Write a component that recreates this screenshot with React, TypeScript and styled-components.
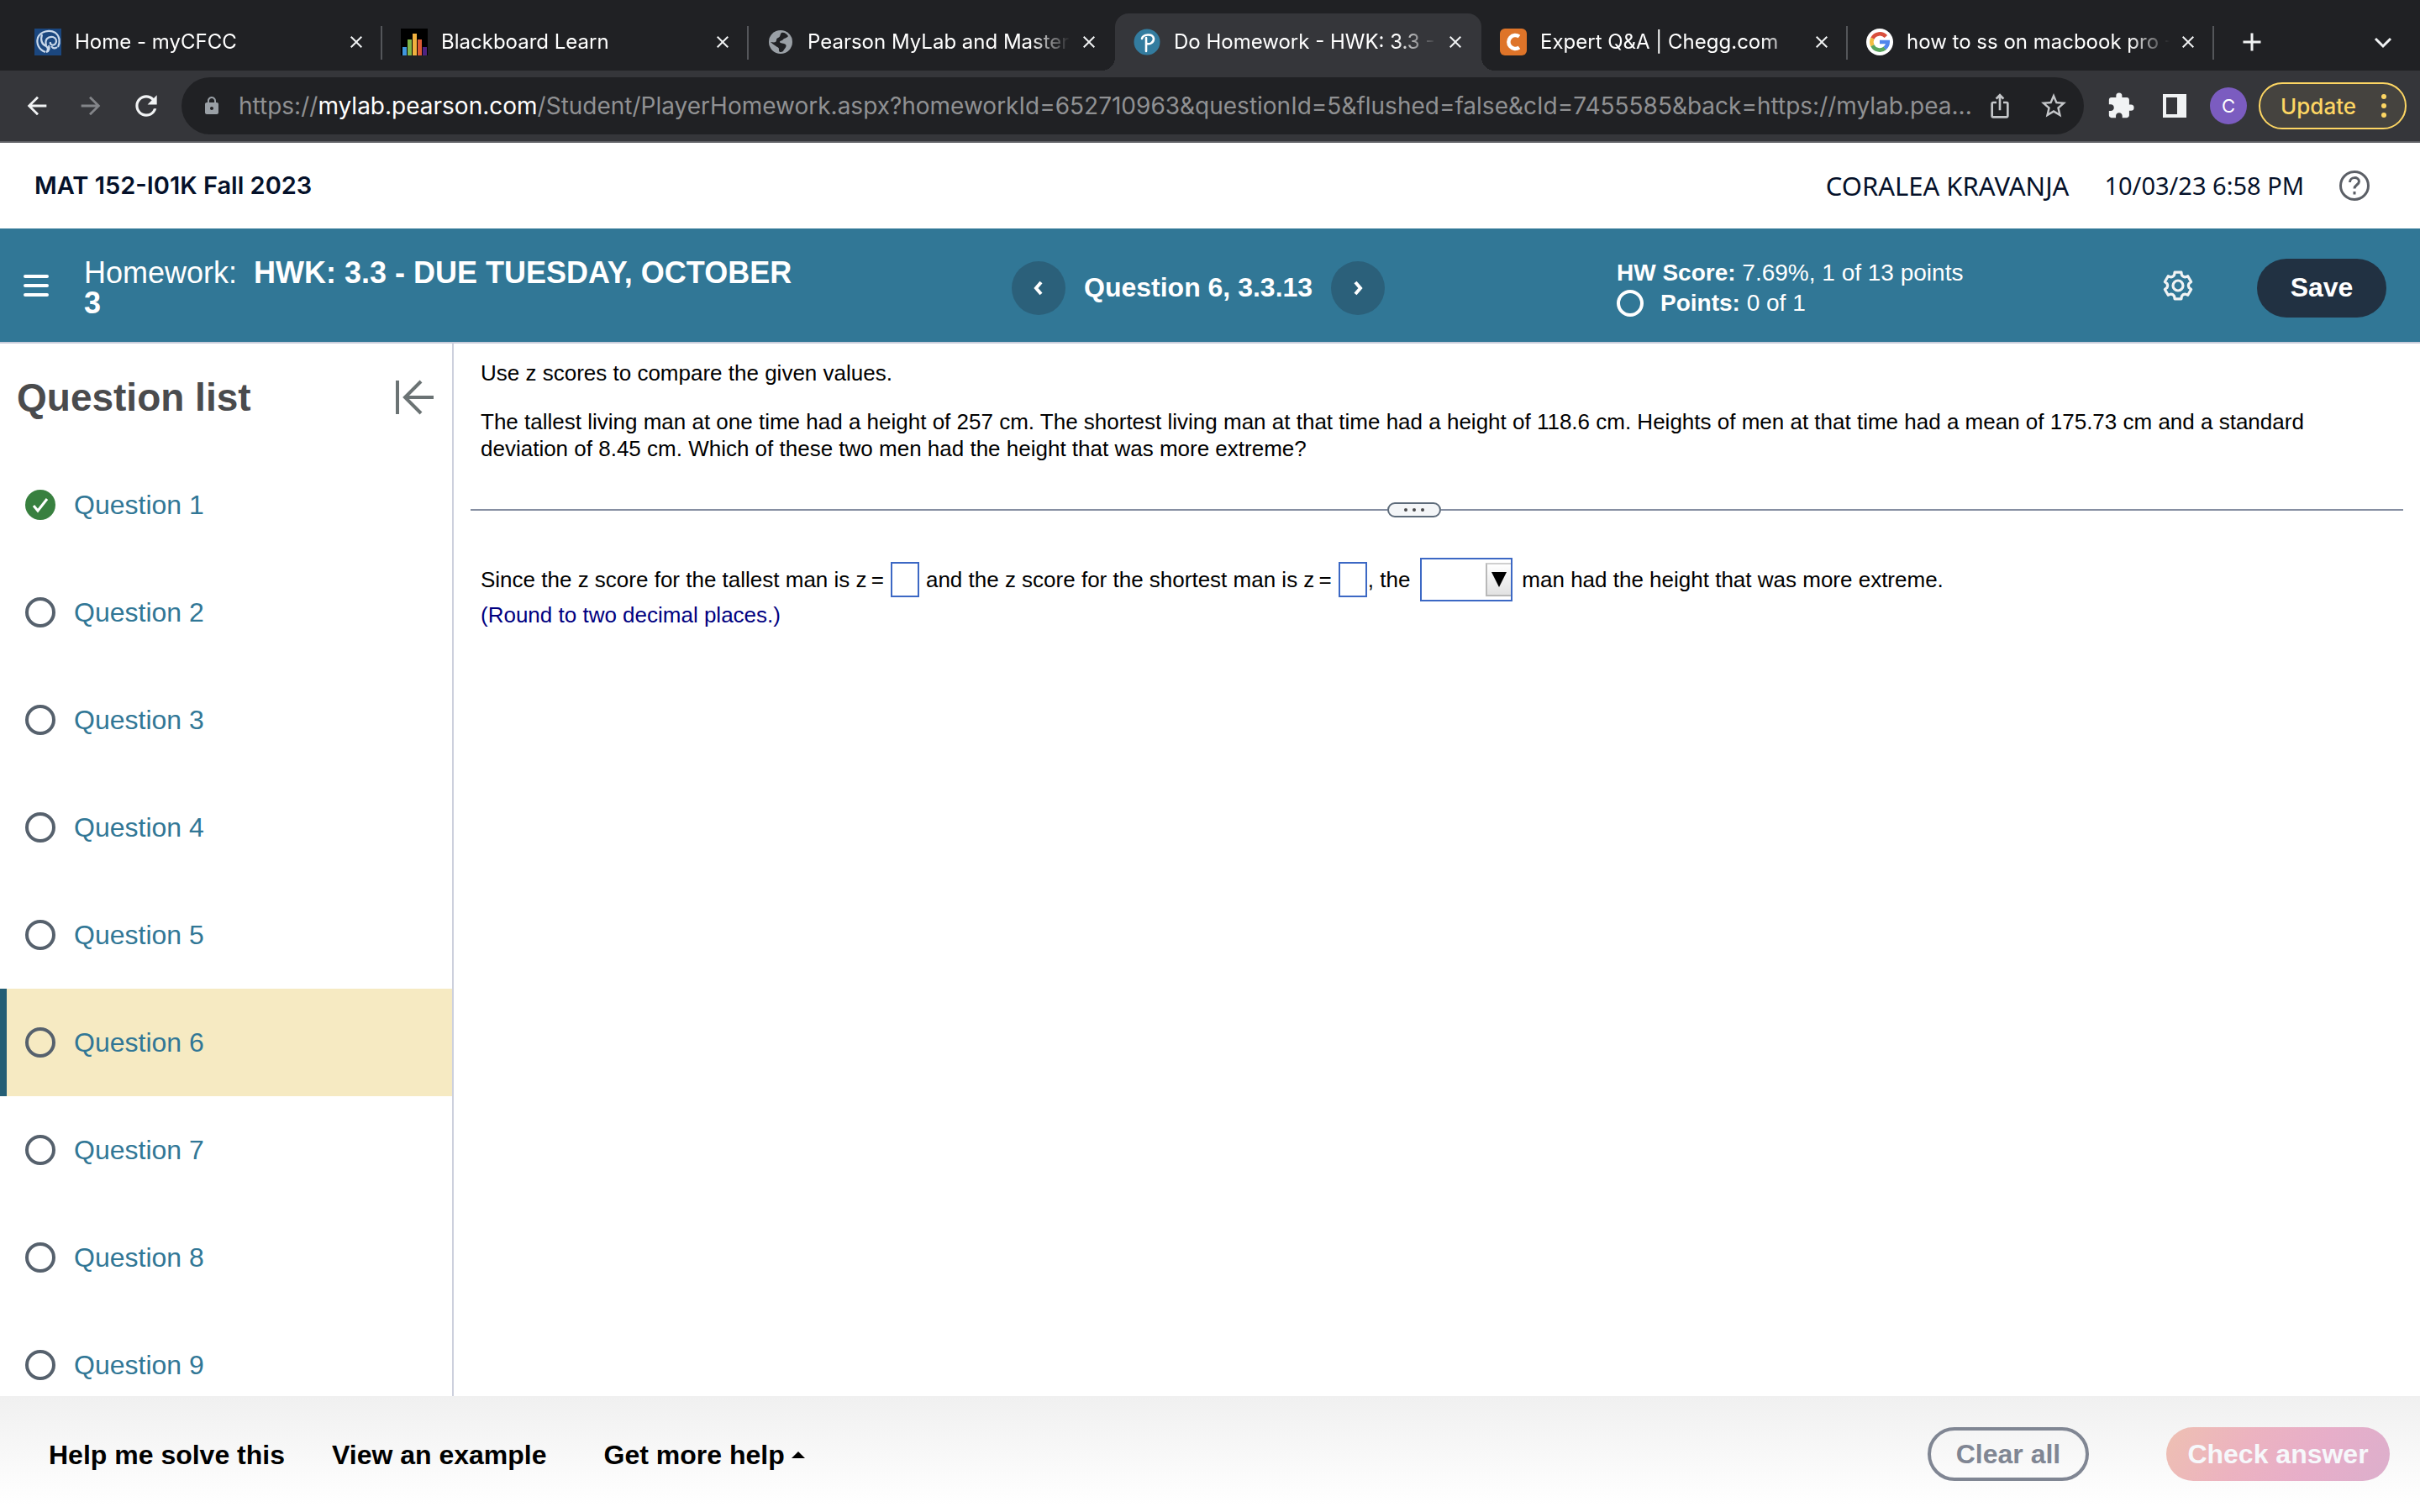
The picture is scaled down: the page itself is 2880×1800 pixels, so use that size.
import React from "react";
import styled, { createGlobalStyle, css } from "styled-components";
import {
  MdArrowBack,
  MdArrowForward,
  MdRefresh,
  MdLock,
  MdIosShare,
  MdStarBorder,
  MdExtension,
  MdAdd,
  MdClose,
} from "react-icons/md";

const ui = `Inter, "Liberation Sans", sans-serif`;
const sans = `"Liberation Sans", Arial, Helvetica, sans-serif`;

const GlobalStyle = createGlobalStyle`
  * { box-sizing: border-box; }
  body { margin: 0; background: #fff; font-family: ${sans}; }
  button { font: inherit; color: inherit; background: none; border: 0; padding: 0; cursor: pointer; }
  p, h1, h2, ul { margin: 0; padding: 0; }
  a { text-decoration: none; }
  svg { display: block; flex: none; }
`;

const Page = styled.div`
  display: flex;
  flex-direction: column;
  height: 100vh;
  overflow: hidden;
`;

/* ---------- browser chrome ---------- */

const TabStrip = styled.div`
  flex: none;
  display: flex;
  align-items: flex-end;
  height: 84px;
  padding: 0 24px 0 19px;
  background: #202124;
  color: #fff;
  font-family: ${ui};
`;

const Tab = styled.div<{ $active?: boolean; $plain?: boolean }>`
  position: relative;
  display: flex;
  align-items: center;
  flex: 0 1 436px;
  min-width: 0;
  height: 68px;
  padding: 0 19px 0 22px;
  ${(p) =>
    p.$active &&
    css`
      background: #35363a;
      border-radius: 16px 16px 0 0;
      &::before,
      &::after {
        content: "";
        position: absolute;
        bottom: 0;
        width: 16px;
        height: 16px;
      }
      &::before {
        right: 100%;
        background: radial-gradient(circle at 0 0, transparent 16px, #35363a 16px);
      }
      &::after {
        left: 100%;
        background: radial-gradient(circle at 100% 0, transparent 16px, #35363a 16px);
      }
    `}
  ${(p) =>
    !p.$active &&
    !p.$plain &&
    css`
      &::after {
        content: "";
        position: absolute;
        right: 0;
        top: 15px;
        width: 2px;
        height: 40px;
        background: #54565a;
      }
    `}
`;

const TabTitle = styled.span`
  flex: 1;
  min-width: 0;
  margin: 0 10px 0 16px;
  overflow: hidden;
  white-space: nowrap;
  font-size: 24px;
  font-weight: 400;
  line-height: 32px;
  mask-image: linear-gradient(to right, #000 calc(100% - 48px), transparent);
`;

const IconButton = styled.button<{ $dim?: boolean }>`
  display: flex;
  align-items: center;
  justify-content: center;
  flex: none;
  color: ${(p) => (p.$dim ? "#838589" : "#f1f3f4")};
`;

const NewTab = styled(IconButton)`
  width: 36px;
  height: 68px;
  margin-left: 27px;
`;

const TabSearch = styled(IconButton)`
  width: 40px;
  height: 68px;
  margin-left: auto;
`;

const Toolbar = styled.div`
  flex: none;
  display: flex;
  align-items: center;
  height: 86px;
  padding: 0 16px 0 27px;
  background: #35363a;
  border-bottom: 2px solid #5f6065;
  font-family: ${ui};
`;

const NavIcons = styled.div`
  display: flex;
  gap: 30px;
  margin-right: 23px;
`;

const Address = styled.div`
  display: flex;
  align-items: center;
  flex: 1;
  min-width: 0;
  height: 68px;
  padding: 0 18px 0 24px;
  border-radius: 34px;
  background: #202124;
  color: #9aa0a6;
`;

const Url = styled.span`
  flex: 1;
  min-width: 0;
  margin: 0 8px 0 20px;
  overflow: hidden;
  white-space: nowrap;
  text-overflow: ellipsis;
  font-size: 28px;
  line-height: 36px;
  color: #909193;
  b {
    font-weight: 400;
    color: #fff;
  }
`;

const AddressActions = styled.div`
  display: flex;
  gap: 30px;
`;

const Extensions = styled.div`
  display: flex;
  align-items: center;
  gap: 20px;
  margin: 0 14px 0 22px;
  > button {
    width: 44px;
    height: 44px;
  }
`;

const Avatar = styled.button`
  border-radius: 50%;
  background: #7b5cc0;
  color: #fff;
  font-size: 22px;
  line-height: 44px;
  text-align: center;
`;

const UpdateButton = styled.button`
  display: flex;
  align-items: center;
  justify-content: space-between;
  width: 176px;
  height: 56px;
  padding: 0 22px 0 24px;
  border: 2px solid #fdd663;
  border-radius: 28px;
  background: #45433f;
  color: #fdd663;
  font-size: 26px;
  font-weight: 500;
`;

/* ---------- course header ---------- */

const CourseHeader = styled.header`
  flex: none;
  display: flex;
  align-items: center;
  gap: 42px;
  height: 102px;
  padding: 0 60px 0 41px;
  color: #05112a;
  font-family: "Noto Sans", "Open Sans", sans-serif;
  font-size: 31px;
  line-height: 40px;
`;

const CourseName = styled.h1`
  margin-right: auto;
  font-family: ${ui};
  font-size: 29px;
  font-weight: 600;
`;

const Clock = styled.time`
  font-size: 29px;
`;

const HelpButton = styled(IconButton)`
  color: #5b5f66;
`;

/* ---------- assignment bar ---------- */

const AssignmentBar = styled.div`
  flex: none;
  display: grid;
  grid-template-columns: 5fr 3fr 4fr;
  align-items: center;
  height: 137px;
  padding-top: 6px;
  border-bottom: 2px solid #c9cddb;
  background: #317796;
  color: #fff;
`;

const AssignmentLeft = styled.div`
  display: flex;
  align-items: center;
  gap: 42px;
  padding-left: 28px;
`;

const BarIcon = styled(IconButton)`
  padding-bottom: 6px;
`;

const AssignmentTitle = styled.h2`
  max-width: 860px;
  font-size: 36px;
  font-weight: 400;
  line-height: 36px;
`;

const QuestionNav = styled.nav`
  display: flex;
  align-items: center;
  gap: 22px;
  padding-left: 4px;
  font-size: 32px;
  font-weight: 700;
`;

const RoundButton = styled.button`
  display: flex;
  align-items: center;
  justify-content: center;
  width: 64px;
  height: 64px;
  border-radius: 50%;
  background: #2b607a;
`;

const AssignmentRight = styled.div`
  display: flex;
  align-items: center;
  padding: 0 40px 0 4px;
`;

const Score = styled.div`
  display: flex;
  flex-direction: column;
  margin-right: auto;
  font-size: 28px;
  line-height: 36px;
`;

const Points = styled.div`
  display: flex;
  align-items: center;
  gap: 20px;
`;

const SettingsButton = styled(BarIcon)`
  margin-right: 76px;
`;

const SaveButton = styled.button`
  width: 154px;
  height: 70px;
  border-radius: 35px;
  background: #213142;
  font-size: 32px;
  font-weight: 700;
`;

/* ---------- body ---------- */

const Body = styled.div`
  flex: 1;
  display: flex;
  min-height: 0;
`;

const Sidebar = styled.aside`
  flex: none;
  width: 540px;
  overflow: hidden;
  border-right: 2px solid #cdd0dd;
`;

const SidebarHead = styled.div`
  display: flex;
  align-items: center;
  justify-content: space-between;
  height: 128px;
  padding: 0 22px 0 20px;
`;

const SidebarTitle = styled.h2`
  color: #4a4b4d;
  font-size: 46px;
  line-height: 56px;
`;

const QuestionList = styled.ul`
  list-style: none;
`;

const QuestionLink = styled.a<{ $current?: boolean }>`
  display: flex;
  align-items: center;
  gap: 22px;
  height: 128px;
  padding-left: 22px;
  border-left: 8px solid ${(p) => (p.$current ? "#245e75" : "transparent")};
  background: ${(p) => (p.$current ? "#f6eac2" : "transparent")};
  background-clip: padding-box;
  color: #317796;
  font-size: 32px;
`;

const Ring = styled.span<{ $light?: boolean }>`
  flex: none;
  width: ${(p) => (p.$light ? 32 : 36)}px;
  height: ${(p) => (p.$light ? 32 : 36)}px;
  border: 4px solid ${(p) => (p.$light ? "#fff" : "#56616d")};
  border-radius: 50%;
`;

const Content = styled.main`
  flex: 1;
  min-width: 0;
  display: flex;
  flex-direction: column;
  padding: 19px 20px 0;
  color: #000;
  font-size: 26px;
  line-height: 32px;
`;

const Prompt = styled.div`
  display: flex;
  flex-direction: column;
  gap: 26px;
  padding: 0 12px;
`;

const Divider = styled.div`
  display: flex;
  align-items: center;
  margin: 48px 0;
`;

const Line = styled.span<{ $share: number }>`
  flex: ${(p) => p.$share};
  height: 2px;
  background: #868fa2;
`;

const Grip = styled.button`
  display: flex;
  align-items: center;
  justify-content: center;
  gap: 6px;
  width: 64px;
  height: 18px;
  border: 2px solid #5d6b7a;
  border-radius: 9px;
  background: #f4f6f8;
`;

const Dot = styled.i`
  width: 4px;
  height: 4px;
  border-radius: 50%;
  background: #4a4b4d;
`;

const Answer = styled.div`
  padding: 0 12px;
`;

const AnswerRow = styled.div`
  display: flex;
  align-items: center;
  gap: 8px;
  height: 52px;
  white-space: nowrap;
`;

const Blank = styled.input`
  width: 34px;
  height: 42px;
  padding: 0 2px;
  border: 2px solid #3c68c4;
  border-radius: 0;
  background: #fff;
  font: inherit;
`;

const BlankGroup = styled.span`
  display: flex;
  align-items: center;
  gap: 1px;
`;

const Choice = styled.span`
  position: relative;
  display: flex;
  width: 110px;
  height: 52px;
  margin: 0 3px 0 4px;
`;

const ChoiceSelect = styled.select`
  appearance: none;
  width: 100%;
  height: 100%;
  padding: 0 32px 0 6px;
  border: 2px solid #3c68c4;
  border-radius: 0;
  background: #fff;
  font: inherit;
`;

const ChoiceArrow = styled.span`
  position: absolute;
  top: 6px;
  right: 2px;
  display: flex;
  align-items: center;
  justify-content: center;
  width: 30px;
  height: 40px;
  border: 2px solid #b9b9b9;
  border-top-color: #cfcfcf;
  border-right: 0;
  background: linear-gradient(#fff, #e2e2e2);
  pointer-events: none;
`;

const Note = styled.p`
  color: #000080;
`;

/* ---------- footer ---------- */

const Footer = styled.footer`
  flex: none;
  display: flex;
  align-items: center;
  height: 138px;
  padding: 0 36px 0 58px;
  background: linear-gradient(#f0f0f0, #fff 95%);
  color: #000;
  font-size: 32px;
  font-weight: 700;
`;

const HelpLinks = styled.div`
  display: flex;
  gap: 56px;
  margin-right: auto;
  padding-top: 2px;
`;

const MoreHelp = styled.button`
  display: flex;
  align-items: center;
  gap: 8px;
  margin-left: 12px;
`;

const Pill = styled.button<{ $primary?: boolean }>`
  height: 64px;
  border-radius: 32px;
  ${(p) =>
    p.$primary
      ? css`
          width: 266px;
          margin-left: 92px;
          color: #f6f8fb;
          background: linear-gradient(120deg, #eec0b2, #ecb3c0 35%, #e7aec9 65%, #dcafcc);
        `
      : css`
          width: 192px;
          color: #808693;
          border: 4px solid #808693;
        `}
`;

/* ---------- drawings ---------- */

const CfccIcon = () => (
  <svg width="32" height="32" viewBox="0 0 32 32">
    <rect width="32" height="32" fill="#1b477f" />
    <g fill="none" stroke="#c9d8ea" strokeWidth="2.2">
      <path d="M13 28C5 25 2 18 4 11 7 3 18 1 25 5c5 4 6 11 3 17" />
      <path d="M9 7c-2 7 0 12 5 14 3 2 2 6 0 7M14 20c-2-7 2-11 8-10 4 1 5 5 3 8-3 3-7 1-6-2M14 28c4-1 4-5 3-8M20 21c2 3 5 3 7 1" />
    </g>
  </svg>
);

const BlackboardIcon = () => (
  <svg width="32" height="32" viewBox="0 0 32 32">
    <rect width="32" height="32" fill="#000" />
    <path fill="#3f96dc" d="M2 22h5v10H2z" />
    <path fill="#7fb548" d="M8 13h5v19H8z" />
    <path fill="#f0b13f" d="M14 6h5v26h-5z" />
    <path fill="#dd5a35" d="M20 13h5v19h-5z" />
    <path fill="#4d2380" d="M26 22h5v10h-5z" />
  </svg>
);

const GlobeIcon = () => (
  <svg width="32" height="32" viewBox="0 0 32 32">
    <circle cx="16" cy="16" r="14" fill="#9aa0a6" />
    <path
      fill="#202124"
      d="M17 5c3-1 6 1 8 4-2 3-5 2-6 4s-4 1-4 3 5 1 7 3c2 3-2 5-3 8-3 2-5 1-5-1 0-3 0-3-2-4-3-2-6-4-8-6 2 0 4 1 6 0 2-2 0-4 3-5s2-4 4-6z"
    />
  </svg>
);

const PearsonIcon = () => (
  <svg width="32" height="32" viewBox="0 0 32 32">
    <circle cx="16" cy="16" r="15.5" fill="#337c9f" />
    <path
      d="M10 12c1-5 13-7 14 0 0 5-5 7-8 6M15 11v16"
      fill="none"
      stroke="#fff"
      strokeWidth="2.6"
      strokeLinecap="round"
    />
  </svg>
);

const CheggIcon = () => (
  <svg width="32" height="32" viewBox="0 0 32 32">
    <rect width="32" height="32" rx="6" fill="#de7429" />
    <path d="M23 9.5a8 8 0 1 0 0 13" fill="none" stroke="#fff" strokeWidth="4.5" />
  </svg>
);

const GoogleIcon = () => (
  <svg width="32" height="32" viewBox="0 0 32 32">
    <circle cx="16" cy="16" r="16" fill="#fff" />
    <g fill="none" strokeWidth="4.6">
      <path stroke="#d94f3d" d="M23.4 9.6a9.7 9.7 0 0 0-16 2.2" />
      <path stroke="#f2bd42" d="M7.4 11.6a9.7 9.7 0 0 0 0 8.8" />
      <path stroke="#58a55c" d="M7.4 20.2a9.7 9.7 0 0 0 14.8 3.2" />
      <path stroke="#5186ec" d="M22 23.5a9.7 9.7 0 0 0 3.7-7.5H16" />
    </g>
  </svg>
);

const tabs = [
  { title: "Home - myCFCC", icon: <CfccIcon /> },
  { title: "Blackboard Learn", icon: <BlackboardIcon /> },
  { title: "Pearson MyLab and Mastering", icon: <GlobeIcon />, plain: true },
  { title: "Do Homework - HWK: 3.3 - DUE", icon: <PearsonIcon />, active: true },
  { title: "Expert Q&A | Chegg.com", icon: <CheggIcon /> },
  { title: "how to ss on macbook pro - Google", icon: <GoogleIcon /> },
];

const Chevron = ({ d, s = 3 }: { d: string; s?: number }) => (
  <svg width="24" height="24" viewBox="0 0 24 24" fill="none" stroke="currentColor" strokeWidth={s}>
    <path d={d} />
  </svg>
);

const CheckedIcon = () => (
  <svg width="36" height="36" viewBox="0 0 36 36">
    <circle cx="18" cy="18" r="18" fill="#38803f" />
    <path d="M10 19l5 6 11-14" fill="none" stroke="#fff" strokeWidth="3" />
  </svg>
);

/* six rounded teeth joined by shallow curved valleys */
const polar = (deg: number, r: number) => {
  const a = (deg * Math.PI) / 180;
  return `${(18 + r * Math.cos(a)).toFixed(2)} ${(18 + r * Math.sin(a)).toFixed(2)}`;
};
const gearPath =
  [0, 1, 2, 3, 4, 5]
    .map((k) => {
      const a = k * 60 - 90;
      return `${k ? "L" : "M"}${polar(a - 14, 16.3)}L${polar(a + 14, 16.3)}L${polar(a + 19, 13.4)}Q${polar(a + 30, 11.6)} ${polar(a + 41, 13.4)}`;
    })
    .join("") + "Z";

const GearIcon = () => (
  <svg
    width="36"
    height="36"
    viewBox="0 0 36 36"
    fill="none"
    stroke="currentColor"
    strokeWidth="3.2"
    strokeLinejoin="round"
  >
    <path d={gearPath} />
    <circle cx="18" cy="18" r="6" />
  </svg>
);

const CollapseIcon = () => (
  <svg width="46" height="44" viewBox="0 0 46 44" fill="none" stroke="#6b7374" strokeWidth="4">
    <path d="M3 2v40M46 22H12M31 3L12 22l19 19" />
  </svg>
);

export default function App() {
  return (
    <Page>
      <GlobalStyle />
      <TabStrip>
        {tabs.map((t) => (
          <Tab key={t.title} $active={t.active} $plain={t.plain}>
            {t.icon}
            <TabTitle>{t.title}</TabTitle>
            <IconButton aria-label="Close tab">
              <MdClose size={24} />
            </IconButton>
          </Tab>
        ))}
        <NewTab aria-label="New tab">
          <MdAdd size={36} />
        </NewTab>
        <TabSearch aria-label="Search tabs">
          <Chevron d="M3 8l9 9 9-9" />
        </TabSearch>
      </TabStrip>

      <Toolbar>
        <NavIcons>
          <IconButton aria-label="Back"><MdArrowBack size={34} /></IconButton>
          <IconButton aria-label="Forward" $dim><MdArrowForward size={34} /></IconButton>
          <IconButton aria-label="Reload"><MdRefresh size={38} /></IconButton>
        </NavIcons>
        <Address>
          <MdLock size={24} />
          <Url>
            https://<b>mylab.pearson.com</b>
            /Student/PlayerHomework.aspx?homeworkId=652710963&amp;questionId=5&amp;flushed=false&amp;cId=7455585&amp;back=https://mylab.pea...
          </Url>
          <AddressActions>
            <IconButton aria-label="Share"><MdIosShare size={32} color="#c4c6c9" /></IconButton>
            <IconButton aria-label="Bookmark"><MdStarBorder size={36} color="#c4c6c9" /></IconButton>
          </AddressActions>
        </Address>
        <Extensions>
          <IconButton aria-label="Extensions"><MdExtension size={34} /></IconButton>
          <IconButton aria-label="Side panel">
            <svg width="28" height="28" viewBox="0 0 28 28">
              <path fill="currentColor" fillRule="evenodd" d="M0 0h28v28H0zM4 4v20h13V4z" />
            </svg>
          </IconButton>
          <Avatar>C</Avatar>
        </Extensions>
        <UpdateButton>
          Update
          <svg width="6" height="28" viewBox="0 0 6 28" fill="currentColor">
            <circle cx="3" cy="3" r="3" />
            <circle cx="3" cy="14" r="3" />
            <circle cx="3" cy="25" r="3" />
          </svg>
        </UpdateButton>
      </Toolbar>

      <CourseHeader>
        <CourseName>MAT 152-I01K Fall 2023</CourseName>
        <span>CORALEA KRAVANJA</span>
        <Clock>10/03/23 6:58 PM</Clock>
        <HelpButton aria-label="Help">
          <svg width="36" height="36" viewBox="0 0 36 36" fill="none" stroke="currentColor" strokeWidth="3">
            <circle cx="18" cy="18" r="16.5" />
            <path d="M12.5 14c0-7 11-7 11-1 0 4-5.5 4-5.5 8.5M18 25v3.5" />
          </svg>
        </HelpButton>
      </CourseHeader>

      <AssignmentBar>
        <AssignmentLeft>
          <BarIcon aria-label="Menu">
            <svg width="30" height="28" viewBox="0 0 30 28" stroke="#fff" strokeWidth="4" strokeLinecap="round">
              <path d="M2 3h26M2 14h26M2 25h26" />
            </svg>
          </BarIcon>
          <AssignmentTitle>
            Homework:&nbsp; <b>HWK: 3.3 - DUE TUESDAY, OCTOBER 3</b>
          </AssignmentTitle>
        </AssignmentLeft>
        <QuestionNav>
          <RoundButton aria-label="Previous question"><Chevron d="M15 5l-6 7 6 7" s={4} /></RoundButton>
          <span>Question 6, 3.3.13</span>
          <RoundButton aria-label="Next question"><Chevron d="M9 5l6 7-6 7" s={4} /></RoundButton>
        </QuestionNav>
        <AssignmentRight>
          <Score>
            <span><b>HW Score:</b> 7.69%, 1 of 13 points</span>
            <Points>
              <Ring $light />
              <span><b>Points:</b> 0 of 1</span>
            </Points>
          </Score>
          <SettingsButton aria-label="Settings"><GearIcon /></SettingsButton>
          <SaveButton>Save</SaveButton>
        </AssignmentRight>
      </AssignmentBar>

      <Body>
        <Sidebar>
          <SidebarHead>
            <SidebarTitle>Question list</SidebarTitle>
            <IconButton aria-label="Collapse question list"><CollapseIcon /></IconButton>
          </SidebarHead>
          <QuestionList>
            {[1, 2, 3, 4, 5, 6, 7, 8, 9].map((n) => (
              <li key={n}>
                <QuestionLink href={`#question-${n}`} $current={n === 6}>
                  {n === 1 ? <CheckedIcon /> : <Ring />}
                  Question {n}
                </QuestionLink>
              </li>
            ))}
          </QuestionList>
        </Sidebar>

        <Content>
          <Prompt>
            <p>Use z scores to compare the given values.</p>
            <p>
              The tallest living man at one time had a height of 257 cm. The shortest living man at that time
              had a height of 118.6 cm. Heights of men at that time had a mean of 175.73 cm and a standard
              deviation of 8.45 cm. Which of these two men had the height that was more extreme?
            </p>
          </Prompt>
          <Divider>
            <Line $share={20} />
            <Grip aria-label="Resize panels"><Dot /><Dot /><Dot /></Grip>
            <Line $share={21} />
          </Divider>
          <Answer>
            <AnswerRow>
              <label htmlFor="z-tallest">Since the z score for the tallest man is z&#8201;=</label>
              <Blank id="z-tallest" />
              <label htmlFor="z-shortest">and the z score for the shortest man is z&#8201;=</label>
              <BlankGroup>
                <Blank id="z-shortest" />
                <label htmlFor="extreme">, the</label>
              </BlankGroup>
              <Choice>
                <ChoiceSelect id="extreme" defaultValue="">
                  <option value=""></option>
                  <option>tallest</option>
                  <option>shortest</option>
                </ChoiceSelect>
                <ChoiceArrow>
                  <svg width="18" height="18" viewBox="0 0 18 18"><path d="M0 0h18L9 18z" /></svg>
                </ChoiceArrow>
              </Choice>
              <span>man had the height that was more extreme.</span>
            </AnswerRow>
            <Note>(Round to two decimal places.)</Note>
          </Answer>
        </Content>
      </Body>

      <Footer>
        <HelpLinks>
          <button>Help me solve this</button>
          <button>View an example</button>
          <MoreHelp>
            Get more help
            <svg width="16" height="8" viewBox="0 0 16 8"><path d="M0 8l8-8 8 8z" /></svg>
          </MoreHelp>
        </HelpLinks>
        <Pill>Clear all</Pill>
        <Pill $primary>Check answer</Pill>
      </Footer>
    </Page>
  );
}
